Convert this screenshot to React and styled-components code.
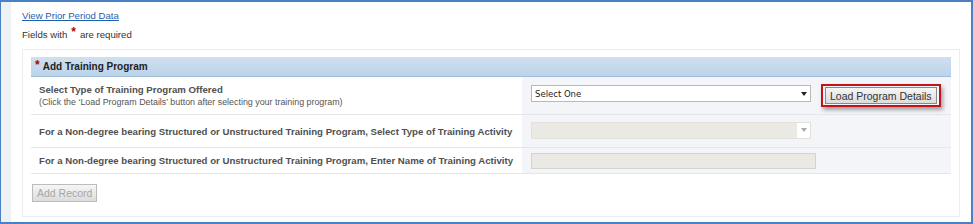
import React from 'react';
import styled, { createGlobalStyle } from 'styled-components';

const Global = createGlobalStyle`
  html, body { margin: 0; padding: 0; background: #ffffff; }
  body { font-family: "Liberation Sans", Arial, sans-serif; }
`;

const Frame = styled.div`
  box-sizing: border-box;
  width: 973px;
  height: 224px;
  border: 2px solid #4a80c4;
  border-left-width: 1px;
  display: flex;
  background: #ffffff;
`;

const Gutter = styled.div`
  width: 10px;
  flex: none;
  background: #eef1f6;
`;

const Content = styled.div`
  flex: 1;
  padding: 7px 10px 0 11px;
  display: flex;
  flex-direction: column;
`;

const PriorLink = styled.a`
  font-size: 9.6px;
  color: #1f5fae;
  text-decoration: underline;
  line-height: 14px;
  align-self: flex-start;
  cursor: pointer;
`;

const Note = styled.div`
  font-size: 9.6px;
  color: #333;
  line-height: 14px;
  margin-top: 4px;
`;

const Star = styled.span`
  color: #b30000;
  font-weight: bold;
  font-size: ${p => p.$size || 11}px;
  margin: ${p => p.$gap || '0 4px'};
  position: relative;
  top: -2px;
`;

const Panel = styled.div`
  margin-top: 7px;
  width: 938px;
  height: 168px;
  box-sizing: border-box;
  border: 1px solid #ececec;
  padding: 7px 8px 0 8px;
`;

const Header = styled.div`
  height: 20px;
  box-sizing: border-box;
  background: linear-gradient(#cfe0ef, #bcd3e8);
  border-bottom: 1px solid #9fbcd8;
  display: flex;
  align-items: center;
  padding-left: 4px;
  font-size: 10px;
  font-weight: bold;
  color: #222;
`;

const Row = styled.div`
  display: grid;
  grid-template-columns: 491px 1fr;
  height: ${p => p.$h}px;
  border-bottom: 1px solid #e4e6ea;
`;

const LabelCell = styled.div`
  display: flex;
  flex-direction: column;
  justify-content: center;
  padding-left: 8px;
  background: #ffffff;
`;

const Label = styled.div`
  font-size: 9.65px;
  font-weight: bold;
  color: #505050;
  line-height: 13px;
  white-space: nowrap;
`;

const Hint = styled.div`
  font-size: 8.9px;
  color: #555;
  line-height: 12px;
`;

const FieldCell = styled.div`
  background: #f3f5f9;
  display: flex;
  align-items: center;
  padding-left: 9px;
  padding-bottom: ${p => p.$lift || 0}px;
  gap: 10px;
`;

const SelectBox = styled.div`
  width: 280px;
  height: 17px;
  box-sizing: border-box;
  border: 1px solid ${p => (p.$disabled ? '#e2e0da' : '#b9b9b9')};
  background: ${p => (p.$disabled ? '#ebe9e3' : '#ffffff')};
  display: flex;
  align-items: center;
  justify-content: space-between;
  font-family: "DejaVu Sans", "Liberation Sans", sans-serif;
  font-size: 8.5px;
  color: #222;
  padding-left: 3px;
`;

const Arrow = styled.div`
  width: 13px;
  height: 100%;
  background: #ffffff;
  display: flex;
  align-items: center;
  justify-content: center;
  &::after {
    content: '';
    border-left: 3px solid transparent;
    border-right: 3px solid transparent;
    border-top: 4px solid ${p => (p.$disabled ? '#aaa' : '#222')};
  }
`;

const TextInput = styled.div`
  width: 285px;
  height: 16px;
  box-sizing: border-box;
  border: 1px solid #d6d3cc;
  background: #ebe9e3;
`;

const Highlight = styled.div`
  border: 2px solid #c0141b;
  padding: 1px 2px;
  box-shadow: 2px 3px 4px rgba(0, 0, 0, 0.35);
  display: flex;
  margin-top: 4px;
`;

const Button = styled.button`
  font-family: "Liberation Sans", Arial, sans-serif;
  font-size: 10.5px;
  color: ${p => (p.disabled ? '#a6a6a6' : '#333')};
  background: linear-gradient(#f6f6f6, #dcdcdc);
  border: 1px solid ${p => (p.disabled ? '#bcbcbc' : '#8a8a8a')};
  padding: 0 4px;
  height: ${p => p.$h || 17}px;
  margin: 0;
  cursor: pointer;
`;

const Footer = styled.div`
  padding: 9px 0 0 1px;
`;

export default function App() {
  return (
    <>
      <Global />
      <Frame>
        <Gutter />
        <Content>
          <PriorLink>View Prior Period Data</PriorLink>
          <Note>
            Fields with<Star $size={12}>*</Star>are required
          </Note>
          <Panel>
            <Header>
              <Star $gap="0 3px 0 0" $size={12}>*</Star>Add Training Program
            </Header>
            <Row $h={37}>
              <LabelCell>
                <Label>Select Type of Training Program Offered</Label>
                <Hint>(Click the ‘Load Program Details’ button after selecting your training program)</Hint>
              </LabelCell>
              <FieldCell $lift={4}>
                <SelectBox>
                  Select One
                  <Arrow />
                </SelectBox>
                <Highlight>
                  <Button $h={17}>Load Program Details</Button>
                </Highlight>
              </FieldCell>
            </Row>
            <Row $h={32}>
              <LabelCell>
                <Label>For a Non-degree bearing Structured or Unstructured Training Program, Select Type of Training Activity</Label>
              </LabelCell>
              <FieldCell $lift={2}>
                <SelectBox $disabled>
                  <span />
                  <Arrow $disabled />
                </SelectBox>
              </FieldCell>
            </Row>
            <Row $h={25}>
              <LabelCell>
                <Label>For a Non-degree bearing Structured or Unstructured Training Program, Enter Name of Training Activity</Label>
              </LabelCell>
              <FieldCell>
                <TextInput />
              </FieldCell>
            </Row>
            <Footer>
              <Button disabled $h={18}>Add Record</Button>
            </Footer>
          </Panel>
        </Content>
      </Frame>
    </>
  );
}
